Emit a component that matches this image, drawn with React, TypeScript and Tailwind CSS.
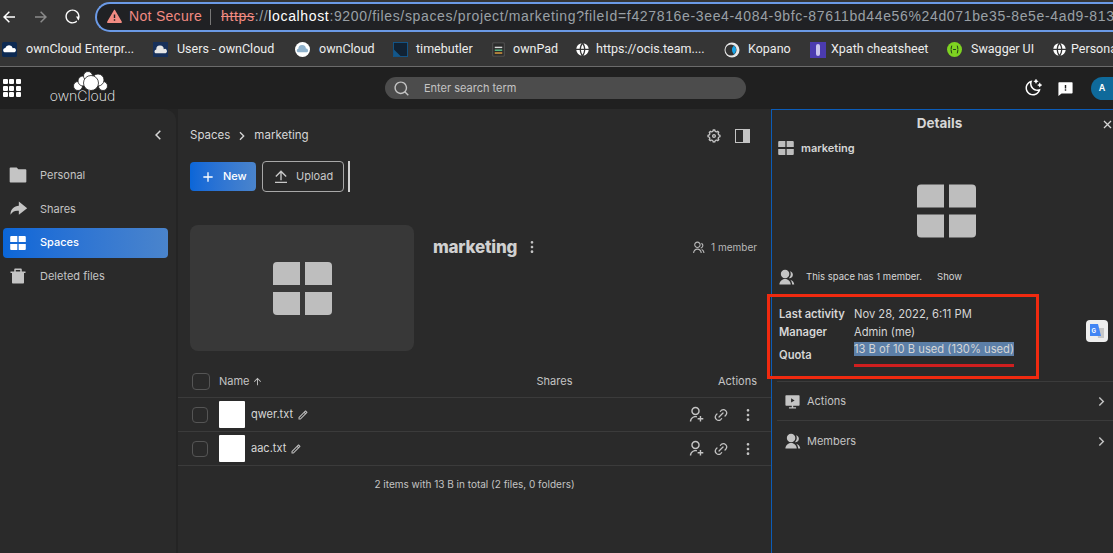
import {
  RiArrowLeftLine,
  RiArrowRightLine,
  RiArrowRightSLine,
  RiArrowLeftSLine,
  RiArrowUpLine,
  RiRestartLine,
  RiAlertFill,
  RiGlobalFill,
  RiSearchLine,
  RiFeedbackFill,
  RiMoonClearLine,
  RiFolderFill,
  RiShareForwardFill,
  RiDeleteBin7Fill,
  RiAddLine,
  RiUploadLine,
  RiSettings5Line,
  RiMore2Fill,
  RiGroupLine,
  RiGroupFill,
  RiUserAddLine,
  RiPencilLine,
  RiCloseLine,
  RiSlideshow3Fill,
} from "react-icons/ri";

const SpaceGrid = ({ className }: { className?: string }) => (
  <svg viewBox="0 0 59 53" className={className} fill="currentColor">
    <path d="M4 0H27V23H0V4a4 4 0 0 1 4-4z" />
    <path d="M32 0H55a4 4 0 0 1 4 4V23H32z" />
    <path d="M0 30H27V53H4a4 4 0 0 1-4-4z" />
    <path d="M32 30H59V49a4 4 0 0 1-4 4H32z" />
  </svg>
);

const LinkIcon = ({ className }: { className?: string }) => (
  <svg viewBox="0 0 24 24" className={className} fill="none" stroke="currentColor" strokeWidth="1.800" strokeLinecap="round">
    <path d="M9 15l6-6" />
    <path d="M11 6.500l1.500-1.500a5 5 0 0 1 7 7L18 13.500" />
    <path d="M13 17.500L11.500 19a5 5 0 0 1-7-7L6 10.500" />
  </svg>
);

const Favicon = ({ kind }: { kind: string }) => {
  if (kind === "globe") return <RiGlobalFill className="h-[15px] w-[15px] shrink-0 text-white" />;
  if (kind === "oc")
    return (
      <svg viewBox="0 0 16 16" className="h-[15px] w-[15px] shrink-0">
        <rect width="16" height="16" rx="2" fill="#0d2a52" />
        <path d="M2.5 11a2.5 2.5 0 0 1 1-4.7 4.2 4.2 0 0 1 8 .4 2.2 2.2 0 0 1 2 4.300z" fill="#fff" />
      </svg>
    );
  if (kind === "oc2")
    return (
      <svg viewBox="0 0 16 16" className="h-[15px] w-[15px] shrink-0">
        <rect width="16" height="16" fill="#17305a" />
        <path d="M2.500 12a2.200 2.200 0 0 1 1-4 4 4 0 0 1 8-.4 2.400 2.400 0 0 1 2 4.400z" fill="#e6e6e6" />
      </svg>
    );
  if (kind === "oc3")
    return (
      <svg viewBox="0 0 16 16" className="h-[15px] w-[15px] shrink-0">
        <circle cx="8" cy="8" r="8" fill="#fff" />
        <path d="M3 11a2 2 0 0 1 .6-3.800 4 4 0 0 1 8-.2 2.200 2.200 0 0 1 1.400 4z" fill="#8fb2cc" />
      </svg>
    );
  if (kind === "tb")
    return (
      <svg viewBox="0 0 16 16" className="h-[15px] w-[15px] shrink-0">
        <rect x="0.500" y="0.500" width="15" height="15" fill="#123" stroke="#13578a" />
        <path d="M1 8l7 7H1z" fill="#13578a" />
      </svg>
    );
  if (kind === "pad")
    return (
      <svg viewBox="0 0 16 16" className="h-[15px] w-[15px] shrink-0">
        <rect x="2" y="1" width="12" height="14" fill="#2b2b2b" stroke="#777" strokeWidth="0.500" />
        <rect x="4" y="5" width="8" height="1.500" fill="#d8d8d8" />
        <rect x="4" y="8" width="8" height="1.500" fill="#5bc08a" />
        <rect x="4" y="11" width="8" height="1.500" fill="#e0a040" />
      </svg>
    );
  if (kind === "kopano")
    return (
      <svg viewBox="0 0 16 16" className="h-[16px] w-[16px] shrink-0">
        <circle cx="8" cy="8" r="7.500" fill="#e8e8e8" />
        <circle cx="7" cy="8" r="5.500" fill="#333" />
        <path d="M10 3.500a6 6 0 0 1 0 9a6 6 0 0 1-2-4.500a6 6 0 0 1 2-4.500z" fill="#19a5e8" />
      </svg>
    );
  if (kind === "xpath")
    return (
      <svg viewBox="0 0 16 16" className="h-[16px] w-[16px] shrink-0">
        <rect width="16" height="16" fill="#4b3bb0" />
        <rect x="6" y="2" width="4" height="12" rx="2" fill="#c9c3ee" />
      </svg>
    );
  return (
    <svg viewBox="0 0 16 16" className="h-[15px] w-[15px] shrink-0">
      <circle cx="8" cy="8" r="8" fill="#7ed321" />
      <path d="M5.500 4C4 4 5 8 4 8c1 0 0 4 1.500 4M10.500 4C12 4 11 8 12 8c-1 0 0 4-1.500 4M6.500 8h3" fill="none" stroke="#24401a" strokeWidth="1.200" />
    </svg>
  );
};

const bookmarks = [
  { kind: "oc", label: "ownCloud Enterpr...", w: "w-[151px]", gap: "gap-[9px]" },
  { kind: "oc2", label: "Users - ownCloud", w: "w-[142px]", gap: "gap-[9px]" },
  { kind: "oc3", label: "ownCloud", w: "w-[98px]", gap: "gap-[9px]" },
  { kind: "tb", label: "timebutler", w: "w-[98px]", gap: "gap-[8px]" },
  { kind: "pad", label: "ownPad", w: "w-[84px]", gap: "gap-[7px]" },
  { kind: "globe", label: "https://ocis.team....", w: "w-[149px]", gap: "gap-[6px]" },
  { kind: "kopano", label: "Kopano", w: "w-[86px]", gap: "gap-[8px]" },
  { kind: "xpath", label: "Xpath cheatsheet", w: "w-[137px]", gap: "gap-[5px]" },
  { kind: "swagger", label: "Swagger UI", w: "w-[105px]", gap: "gap-[9px]" },
  { kind: "globe", label: "Personal", w: "w-[70px]", gap: "gap-[4px]" },
];

const navItems = [
  { label: "Personal", Icon: RiFolderFill },
  { label: "Shares", Icon: RiShareForwardFill },
];

const FileRow = ({ name }: { name: string }) => (
  <div className="flex h-[34px] items-center border-b border-[#3b3b3b] pl-[14px] pr-[15px]">
    <div className="h-[16px] w-[16px] rounded-[4px] border border-[#555]" />
    <div className="ml-[11px] h-[27px] w-[26px] rounded-[1px] bg-white" />
    <span className="ml-[6px] text-[11px] text-[#d6d6d6]">{name}</span>
    <RiPencilLine className="ml-[4px] h-[12px] w-[12px] text-[#bdbdbd]" />
    <div className="ml-auto flex items-center text-[#c4c4c4]">
      <RiUserAddLine className="-ml-[1px] h-[17px] w-[17px]" />
      <LinkIcon className="ml-[9px] h-[16px] w-[16px]" />
      <RiMore2Fill className="ml-[11px] h-[16px] w-[16px]" />
    </div>
  </div>
);

export default function App() {
  return (
    <div className="relative flex h-[553px] w-[1113px] flex-col overflow-hidden bg-[#2a2a2a] font-['Inter',sans-serif] text-[#d6d6d6]">
      {/* browser toolbar */}
      <div className="flex h-[33px] shrink-0 items-center bg-[#353535] font-['Liberation_Sans',sans-serif]">
        <RiArrowLeftLine className="h-[18px] w-[18px] shrink-0 text-white" />
        <RiArrowRightLine className="ml-[14px] h-[18px] w-[18px] shrink-0 text-[#8a8a8a]" />
        <RiRestartLine className="ml-[14px] h-[17px] w-[17px] shrink-0 text-white" />
        <div className="ml-[14px] flex h-[30px] w-[1040px] shrink-0 items-center overflow-hidden whitespace-nowrap rounded-l-full border-2 border-r-0 border-[#6b9ae6] bg-[#202124] pl-[9px] text-[14px] tracking-[0.3px]">
          <RiAlertFill className="h-[17px] w-[17px] shrink-0 text-[#f28b82]" />
          <span className="ml-[6px] text-[#f28b82]">Not Secure</span>
          <span className="ml-[8px] h-[16px] w-px shrink-0 bg-[#777]" />
          <span className="ml-[10px] tracking-[0.65px] text-[#f28b82] line-through">https</span>
          <span className="tracking-[0.65px] text-[#9aa0a6]">://</span>
          <span className="tracking-[0.65px] text-white">localhost</span>
          <span className="tracking-[0.65px] text-[#9aa0a6]">:9200/files/spaces/project/marketing?fileId=f427816e-3ee4-4084-9bfc-87611bd44e56%24d071be35-8e5e-4ad9-813</span>
        </div>
      </div>

      {/* bookmarks */}
      <div className="flex h-[34px] shrink-0 items-center overflow-hidden whitespace-nowrap border-b border-[#6b6b6b] bg-[#353535] pl-[2px] font-['Roboto',sans-serif] text-[12.5px] text-[#ededed]">
        {bookmarks.map((b) => (
          <div key={b.label + b.kind} className={`flex shrink-0 items-center ${b.w} ${b.gap}`}>
            <Favicon kind={b.kind} />
            <span>{b.label}</span>
          </div>
        ))}
      </div>

      {/* app header */}
      <div className="flex h-[42px] shrink-0 items-center bg-[#202020]">
        <div className="ml-[3px] grid h-[18px] w-[18px] grid-cols-3 gap-[1.500px]">
          {[0, 1, 2, 3, 4, 5, 6, 7, 8].map((i) => (
            <div key={i} className="rounded-[1px] bg-white" />
          ))}
        </div>
        <div className="relative ml-[29px] h-[34px] w-[60px]">
          <svg viewBox="0 0 36 24" className="absolute left-[21px] top-[0px] h-[24px] w-[38px]" fill="#fff" stroke="#202020" strokeWidth="0.800">
            <circle cx="6" cy="15" r="4.500" />
            <circle cx="31" cy="15" r="4.500" />
            <circle cx="11" cy="10" r="5" />
            <circle cx="26" cy="9" r="6" />
            <circle cx="16" cy="5" r="4.500" />
            <circle cx="19" cy="12" r="7.500" />
          </svg>
          <span className="absolute left-0 top-[17px] whitespace-nowrap text-[14px] font-extralight leading-[16px] text-white">ownCloud</span>
        </div>
        <div className="ml-[276px] flex h-[22px] w-[361px] shrink-0 items-center rounded-full bg-[#4c4c4c] pl-[8px] text-[11px] text-[#c4c4c4]">
          <RiSearchLine className="h-[17px] w-[17px]" />
          <span className="ml-[14px]">Enter search term</span>
        </div>
        <RiMoonClearLine className="ml-[278px] h-[18px] w-[18px] shrink-0 text-white" />
        <RiFeedbackFill className="ml-[15px] h-[17px] w-[17px] shrink-0 text-white" />
        <div className="ml-[17px] flex h-[23px] w-[22px] shrink-0 items-center justify-center rounded-l-full bg-[#0f6a9b] text-[9px] font-semibold text-white">A</div>
      </div>

      {/* body */}
      <div className="flex min-h-0 flex-1 bg-[#242424]">
        <aside className="flex w-[176px] shrink-0 flex-col rounded-tr-[12px] bg-[#2a2a2a] pt-[17px]">
          <RiArrowLeftSLine className="ml-[149px] h-[18px] w-[18px] text-[#d6d6d6]" />
          <nav className="mt-[14px] flex flex-col text-[11px] text-[#c4c4c4]">
            {navItems.map(({ label, Icon }) => (
              <div key={label} className="flex h-[34px] items-center pl-[8px]">
                <Icon className="h-[20px] w-[20px] text-[#c4c4c4]" />
                <span className="ml-[12px]">{label}</span>
              </div>
            ))}
            <div className="ml-[3px] mt-[2px] flex h-[30px] w-[165px] items-center rounded-[4px] bg-gradient-to-r from-[#0a66d8] to-[#4a84cc] pl-[7px] text-white">
              <SpaceGrid className="h-[14px] w-[16px] text-white" />
              <span className="-mt-[1px] ml-[14px] font-medium">Spaces</span>
            </div>
            <div className="flex h-[36px] items-center pl-[9px]">
              <RiDeleteBin7Fill className="h-[18px] w-[18px] text-[#c4c4c4]" />
              <span className="ml-[13px]">Deleted files</span>
            </div>
          </nav>
        </aside>

        <main className="ml-[2px] flex w-[594px] shrink-0 flex-col border-r border-[#0b5cb8] bg-[#2a2a2a] pt-[18px]">
          <div className="flex h-[18px] items-center pl-[12px] pr-[21px] text-[11.500px]">
            <span>Spaces</span>
            <RiArrowRightSLine className="mx-[4px] h-[16px] w-[16px]" />
            <span>marketing</span>
            <RiSettings5Line className="ml-auto h-[16px] w-[16px] text-[#c4c4c4]" />
            <div className="ml-[13px] flex h-[14px] w-[15px] border border-[#c4c4c4]">
              <div className="flex-1" />
              <div className="w-[6px] bg-[#c4c4c4]" />
            </div>
          </div>

          <div className="mt-[16px] flex h-[31px] items-center pl-[12px] text-[11px]">
            <button className="flex h-[29px] w-[66px] items-center rounded-[4px] bg-gradient-to-r from-[#0a66d8] to-[#4a84cc] pl-[10px] font-medium text-white">
              <RiAddLine className="h-[16px] w-[16px]" />
              <span className="ml-[7px]">New</span>
            </button>
            <button className="ml-[6px] flex h-[31px] w-[82px] items-center rounded-[4px] border border-[#a8a8a8] pl-[10px] text-[#c9c9c9]">
              <RiUploadLine className="h-[16px] w-[16px]" />
              <span className="ml-[7px]">Upload</span>
            </button>
            <div className="ml-[4px] h-[31px] w-[2px] bg-[#d0d0d0]" />
          </div>

          <div className="mt-[33px] flex h-[126px] pl-[12px] pr-[14px]">
            <div className="flex h-[126px] w-[224px] items-center justify-center rounded-[8px] bg-[#383838]">
              <SpaceGrid className="h-[53px] w-[59px] text-[#bebebe]" />
            </div>
            <div className="ml-[19px] flex h-[44px] flex-1 items-center">
              <span className="mt-[1px] text-[17px] font-extrabold tracking-[-0.2px] text-[#d0d0d0]">marketing</span>
              <RiMore2Fill className="ml-[7px] h-[16px] w-[16px] text-[#c4c4c4]" />
              <RiGroupLine className="ml-auto h-[13px] w-[13px] text-[#b8b8b8]" />
              <span className="ml-[6px] text-[10px] text-[#b8b8b8]">1 member</span>
            </div>
          </div>

          <div className="mt-[20px] flex h-[27px] items-center border-b border-[#3b3b3b] pb-[5px] pl-[14px] pr-[14px] text-[11px] text-[#c4c4c4]">
            <div className="h-[17px] w-[18px] rounded-[4px] border border-[#555]" />
            <span className="ml-[9px]">Name</span>
            <RiArrowUpLine className="ml-[2px] h-[11px] w-[11px]" />
            <span className="ml-[274px]">Shares</span>
            <span className="ml-auto">Actions</span>
          </div>
          <FileRow name="qwer.txt" />
          <FileRow name="aac.txt" />
          <div className="mt-[11px] text-center text-[10px] text-[#c4c4c4]">2 items with 13 B in total (2 files, 0 folders)</div>
        </main>

        <section className="flex min-w-0 flex-1 flex-col border-t border-[#0b5cb8] bg-[#2a2a2a]">
          <div className="relative flex h-[27px] items-center justify-center text-[13.500px] font-bold">
            <span className="-ml-[6px]">Details</span>
            <RiCloseLine className="absolute right-[-2px] top-[7px] h-[15px] w-[15px] text-[#d6d6d6]" />
          </div>
          <div className="flex h-[22px] items-center pl-[6px] text-[11px] font-semibold">
            <SpaceGrid className="h-[14px] w-[16px] text-[#bebebe]" />
            <span className="ml-[7px]">marketing</span>
          </div>
          <div className="mt-[25px] flex justify-center">
            <SpaceGrid className="ml-[8px] h-[54px] w-[59px] text-[#bebebe]" />
          </div>
          <div className="mt-[30px] flex h-[18px] items-center pl-[6px] text-[9.500px]">
            <RiGroupFill className="h-[17px] w-[17px] text-[#c4c4c4]" />
            <span className="ml-[11px]">This space has 1 member.</span>
            <span className="ml-[15px]">Show</span>
          </div>

          <div className="mt-[19px] flex h-[67px] flex-col pl-[7px] text-[11.200px]">
            <div className="flex h-[18px] items-center">
              <span className="w-[75px] font-semibold">Last activity</span>
              <span>Nov 28, 2022, 6:11 PM</span>
            </div>
            <div className="flex h-[19px] items-center">
              <span className="w-[75px] font-semibold">Manager</span>
              <span>Admin (me)</span>
            </div>
            <div className="flex">
              <span className="mt-[5px] w-[75px] font-semibold">Quota</span>
              <div className="flex flex-col">
                <span className="h-[14px] w-[160px] whitespace-nowrap bg-[#5c7fa8] leading-[14px]">13 B of 10 B used (130% used)</span>
                <span className="mt-[8px] h-[3px] w-[160px] bg-[#d01f1f]" />
              </div>
            </div>
          </div>

          <div className="ml-[5px] mt-[9px] flex h-[40px] items-center border-y border-[#3b3b3b] pl-[7px] pr-[3px] text-[11px] text-[#c4c4c4]">
            <RiSlideshow3Fill className="h-[17px] w-[17px]" />
            <span className="ml-[6px]">Actions</span>
            <RiArrowRightSLine className="ml-auto h-[17px] w-[17px]" />
          </div>
          <div className="ml-[5px] flex h-[41px] items-center pl-[7px] pr-[3px] text-[11px] text-[#c4c4c4]">
            <RiGroupFill className="h-[17px] w-[17px]" />
            <span className="ml-[6px]">Members</span>
            <RiArrowRightSLine className="ml-auto h-[17px] w-[17px]" />
          </div>
        </section>
      </div>

      {/* annotation over the screenshot */}
      <div className="absolute left-[767px] top-[294px] h-[85px] w-[272px] border-[3px] border-[#f02a10]" />

      {/* translate extension badge */}
      <div className="absolute left-[1086px] top-[320px] flex h-[22px] w-[22px] items-center justify-center rounded-[4px] bg-[#eeeeee]">
        <svg viewBox="0 0 16 16" className="h-[16px] w-[16px]">
          <path d="M8 5h7v10H9z" fill="#c8c8c8" />
          <path d="M1 1h8l3 12H1z" fill="#4285f4" />
          <text x="2.500" y="9.500" fontSize="6" fontWeight="700" fill="#fff">G</text>
        </svg>
      </div>
    </div>
  );
}
